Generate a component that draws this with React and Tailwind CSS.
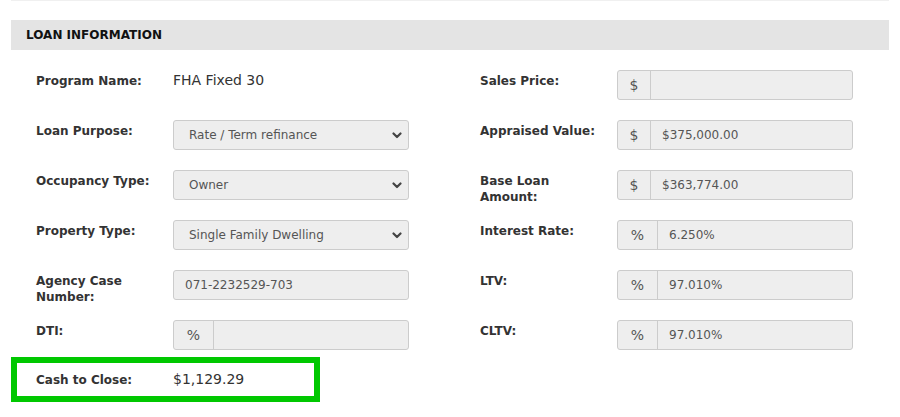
import { useState } from "react";

const font = { fontFamily: '"DejaVu Sans", Verdana, sans-serif' };

const Chevron = () => (
    <svg width="10" height="7" viewBox="0 0 10 7" className="shrink-0">
        <path d="M1.5 1.5 L5 5 L8.5 1.5" fill="none" stroke="#444" strokeWidth="2.2" strokeLinecap="round" strokeLinejoin="round" />
    </svg>
);

const Label = ({ children }) => (
    <div className="w-[137px] shrink-0 pt-[3px] text-[12px] font-bold leading-[16px] text-[#333]">{children}</div>
);

const SelectBox = ({ value }) => (
    <div className="flex h-[30px] w-[236px] items-center justify-between rounded-[3px] border border-[#ccc] bg-[#eee] pl-[15px] pr-[6px] text-[12px] text-[#555]">
        <span>{value}</span>
        <Chevron />
    </div>
);

const TextBox = ({ value }) => (
    <div className="flex h-[30px] w-[236px] items-center rounded-[3px] border border-[#ccc] bg-[#eee] px-[11px] text-[12px] text-[#555]">
        {value}
    </div>
);

const AddonBox = ({ addon, value }) => (
    <div className="flex h-[30px] w-[236px] overflow-hidden rounded-[3px] border border-[#ccc] bg-[#eee] text-[#555]">
        <div className={`flex items-center justify-center border-r border-[#ccc] text-[14px] ${addon === "$" ? "w-[33px]" : "w-[40px]"}`}>{addon}</div>
        <div className="flex flex-1 items-center px-[11px] text-[12px]">{value}</div>
    </div>
);

const Row = ({ label, children }) => (
    <div className="flex h-[30px]">
        <Label>{label}</Label>
        {children}
    </div>
);

export default function App() {
    const [info] = useState({
        program: "FHA Fixed 30",
        purpose: "Rate / Term refinance",
        occupancy: "Owner",
        propertyType: "Single Family Dwelling",
        caseNumber: "071-2232529-703",
        appraised: "$375,000.00",
        baseLoan: "$363,774.00",
        rate: "6.250%",
        ltv: "97.010%",
        cltv: "97.010%",
        cash: "$1,129.29",
    });

    return (
        <div className="h-[417px] w-[900px] overflow-hidden bg-white" style={font}>
            <div className="ml-[11px] w-[878px]">
                <div className="h-px bg-[#f0f0f0]"></div>
                {/* section header */}
                <div className="mt-[19px] flex h-[30px] items-center bg-[#e4e4e4] pl-[15px] text-[12px] font-bold text-[#111]">
                    LOAN INFORMATION
                </div>

                <div className="mt-[20px] grid grid-cols-[444px_1fr] pl-[25px]">
                    {/* left column */}
                    <div className="flex flex-col gap-[20px]">
                        <Row label="Program Name:">
                            <div className="pt-[1px] text-[14px] leading-[18px] text-[#333]">{info.program}</div>
                        </Row>
                        <Row label="Loan Purpose:"><SelectBox value={info.purpose} /></Row>
                        <Row label="Occupancy Type:"><SelectBox value={info.occupancy} /></Row>
                        <Row label="Property Type:"><SelectBox value={info.propertyType} /></Row>
                        <Row label={<>Agency Case<br />Number:</>}><TextBox value={info.caseNumber} /></Row>
                        <Row label="DTI:"><AddonBox addon="%" value="" /></Row>
                    </div>
                    {/* right column */}
                    <div className="flex flex-col gap-[20px]">
                        <Row label="Sales Price:"><AddonBox addon="$" value="" /></Row>
                        <Row label="Appraised Value:"><AddonBox addon="$" value={info.appraised} /></Row>
                        <Row label={<>Base Loan<br />Amount:</>}><AddonBox addon="$" value={info.baseLoan} /></Row>
                        <Row label="Interest Rate:"><AddonBox addon="%" value={info.rate} /></Row>
                        <Row label="LTV:"><AddonBox addon="%" value={info.ltv} /></Row>
                        <Row label="CLTV:"><AddonBox addon="%" value={info.cltv} /></Row>
                    </div>
                </div>

                {/* highlighted cash to close */}
                <div className="mt-[7px] flex h-[45px] w-[309px] items-center border-[6px] border-[#00c800] pl-[19px]">
                    <div className="w-[137px] shrink-0 text-[12px] font-bold text-[#333]">Cash to Close:</div>
                    <div className="text-[14px] text-[#333]">{info.cash}</div>
                </div>
            </div>
        </div>
    );
}
